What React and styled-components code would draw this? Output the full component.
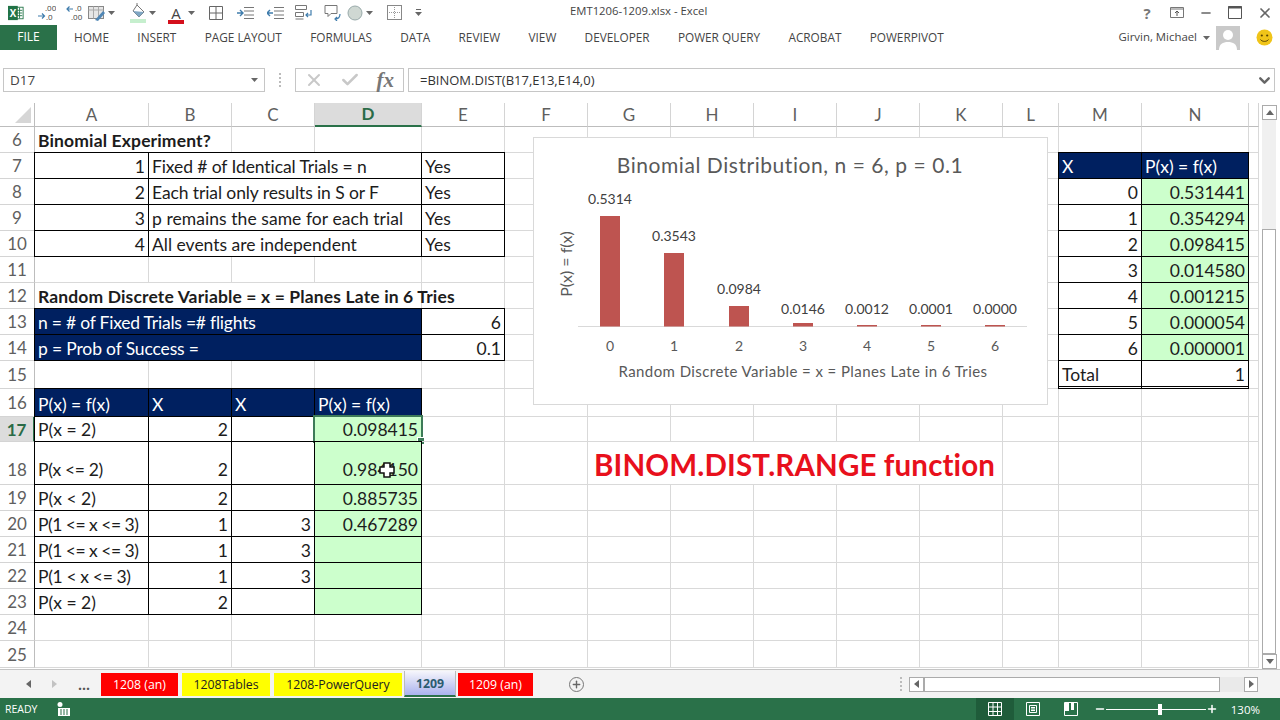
import styled, { createGlobalStyle } from 'styled-components';
import { X, Check, ChevronDown, Plus, Minus } from 'lucide-react';

const GlobalStyle = createGlobalStyle`
  html, body {
    margin: 0;
    padding: 0;
    background: #fff;
    overflow: hidden;
  }
  * {
    box-sizing: border-box;
  }
`;

const GREEN = '#2a7149';
const NAVY = '#002060';
const MINT = '#ccffcc';
const UI_FONT = '"Open Sans", "Liberation Sans", sans-serif';
const CELL_FONT = 'Lato, "Liberation Sans", sans-serif';

const Page = styled.div`
  width: 1280px;
  height: 720px;
  display: flex;
  flex-direction: column;
  font-family: ${UI_FONT};
  color: #444;
  overflow: hidden;
`;

const TitleBar = styled.div`
  height: 25px;
  display: flex;
  align-items: center;
  position: relative;
  padding-left: 8px;
`;

const TitleText = styled.div`
  position: absolute;
  left: 570px;
  top: 3px;
  font-size: 11.300px;
  color: #444;
`;

const QatSlot = styled.span`
  display: flex;
  align-items: center;
  margin-left: ${(p) => p.$gap || 0}px;
`;

const WindowButtons = styled.div`
  margin-left: auto;
  display: flex;
  align-items: center;
  gap: 15px;
  padding-right: 7px;
`;

const Help = styled.span`
  font-size: 15px;
  font-weight: 700;
  color: #777;
  width: 16px;
  text-align: center;
`;

const Ribbon = styled.div`
  height: 25px;
  display: flex;
  align-items: center;
`;

const FileTab = styled.div`
  width: 57px;
  height: 25px;
  padding-bottom: 2px;
  background: ${GREEN};
  color: #fff;
  font-size: 12px;
  display: flex;
  align-items: center;
  justify-content: center;
`;

const RibbonTabs = styled.div`
  display: flex;
  gap: 28.300px;
  margin-left: 17px;
  padding-bottom: 2px;
  font-size: 11.800px;
  color: #444;
`;

const UserArea = styled.div`
  margin-left: auto;
  display: flex;
  align-items: center;
  font-size: 11.400px;
  color: #444;
  padding-right: 7px;
`;

const UserName = styled.span`
  padding-bottom: 2px;
`;

const FormulaRow = styled.div`
  height: 24px;
  margin-top: 18px;
  padding-left: 3px;
  padding-right: 5px;
  display: flex;
  align-items: stretch;
`;

const NameBox = styled.div`
  width: 262px;
  border: 1px solid #c6c6c6;
  display: flex;
  align-items: center;
  justify-content: space-between;
  padding: 0 6px;
  font-size: 13.500px;
  color: #444;
`;

const GripDots = styled.div`
  width: 30px;
  display: flex;
  flex-direction: column;
  align-items: center;
  justify-content: center;
  gap: 2px;

  span {
    width: 2px;
    height: 2px;
    background: #bbb;
  }
`;

const FxButtons = styled.div`
  width: 109px;
  border: 1px solid #c6c6c6;
  display: flex;
  align-items: center;
  justify-content: space-between;
  padding: 0 9px 0 8px;
`;

const FxLabel = styled.span`
  font-family: "Liberation Serif", serif;
  font-style: italic;
  font-weight: 700;
  font-size: 21px;
  line-height: 20px;
  color: #777;
`;

const FormulaInput = styled.div`
  flex: 1;
  margin-left: 4px;
  border: 1px solid #c6c6c6;
  display: flex;
  align-items: center;
  justify-content: space-between;
  padding: 0 1px 0 11px;
  font-size: 13px;
  color: #333;
`;

const SheetArea = styled.div`
  margin-top: 11px;
  height: 566px;
  display: flex;
  position: relative;
`;

const Grid = styled.div`
  width: 1259px;
  height: 566px;
  display: grid;
  grid-template-columns: ${(p) => p.$columns};
  grid-template-rows: ${(p) => p.$rows};
  align-content: start;
  font-family: ${CELL_FONT};
  font-size: 17.500px;
  color: #1c1c1c;
`;

const ColHead = styled.div`
  display: flex;
  align-items: center;
  justify-content: center;
  font-size: 17px;
  line-height: 24px;
  color: ${(p) => (p.$active ? '#2a6b47' : '#5f5f5f')};
  font-weight: ${(p) => (p.$active ? 700 : 400)};
  background: ${(p) => (p.$active ? '#dcdcdc' : '#fff')};
  border-right: 1px solid #d4d4d4;
  border-bottom: ${(p) => (p.$active ? `2px solid ${GREEN}` : '1px solid #bdbdbd')};
`;

const RowHead = styled(ColHead)`
  align-items: ${(p) => (p.$bottom ? 'flex-end' : 'center')};
  padding: ${(p) => (p.$bottom ? '0 0 2px' : '1px 0 0')};
  border-right: ${(p) => (p.$active ? `2px solid ${GREEN}` : '1px solid #bdbdbd')};
  border-bottom: 1px solid #d4d4d4;
`;

const Corner = styled.div`
  border-right: 1px solid #bdbdbd;
  border-bottom: 1px solid #bdbdbd;
  display: flex;
  align-items: flex-end;
  justify-content: flex-end;
  padding: 0 3px 3px 0;
`;

const Cell = styled.div`
  grid-column: span ${(p) => p.$span || 1};
  display: flex;
  align-items: flex-end;
  justify-content: ${(p) => (p.$right ? 'flex-end' : 'flex-start')};
  padding: 0 3px ${(p) => p.$lift || 0}px ${(p) => (p.$red ? 6 : 3)}px;
  line-height: ${(p) => (p.$red ? '38px' : '22px')};
  white-space: nowrap;
  position: relative;
  min-width: 0;
  font-weight: ${(p) => (p.$bold ? 700 : 400)};
  letter-spacing: ${(p) => (p.$bold ? 0.14 : p.$ls || 0)}px;
  color: ${(p) => (p.$navy ? '#fff' : p.$red ? '#e8101c' : '#1c1c1c')};
  background: ${(p) => (p.$navy ? NAVY : p.$mint ? MINT : 'transparent')};
  font-size: ${(p) => (p.$red ? '29.500px' : 'inherit')};
  border-right: 1px solid ${(p) => (p.$box || p.$navy ? '#000' : '#d9d9d9')};
  border-bottom: ${(p) => (p.$double ? '3px double #000' : `1px solid ${p.$box || p.$navy ? '#000' : '#d9d9d9'}`)};
  box-shadow: ${(p) => (p.$box || p.$navy ? '-1px 0 0 #000, 0 -1px 0 #000, -1px -1px 0 #000' : 'none')};
`;

const Selection = styled.div`
  position: absolute;
  left: -2px;
  top: -2px;
  right: -2px;
  bottom: -2px;
  border: 2px solid #3d7a58;
  pointer-events: none;

  &::after {
    content: '';
    position: absolute;
    right: -4px;
    bottom: -4px;
    width: 6px;
    height: 6px;
    background: #3d7a58;
    border: 1px solid #fff;
  }
`;

const ChartBox = styled.div`
  position: absolute;
  left: 533px;
  top: 34px;
  width: 515px;
  height: 268px;
  background: #fff;
  border: 1px solid #d9d9d9;
`;

const CrossCursor = styled.svg`
  position: absolute;
  left: 379px;
  top: 359px;
`;

const VScroll = styled.div`
  width: 21px;
  padding: 2px 4px 0 3px;
  display: flex;
  flex-direction: column;
  background: #fff;
`;

const ScrollArrow = styled.div`
  width: ${(p) => p.$w || 15}px;
  height: 15px;
  flex: none;
  border: 1px solid #ababab;
  background: #fff;
  display: flex;
  align-items: center;
  justify-content: center;
`;

const Triangle = styled.span`
  width: 0;
  height: 0;
  ${(p) => (p.$dir === 'up' ? 'border: 4px solid transparent; border-top: 0; border-bottom: 5px solid #666;' : '')}
  ${(p) => (p.$dir === 'down' ? 'border: 4px solid transparent; border-bottom: 0; border-top: 5px solid #666;' : '')}
  ${(p) => (p.$dir === 'left' ? 'border: 4px solid transparent; border-left: 0; border-right: 5px solid #666;' : '')}
  ${(p) => (p.$dir === 'right' ? 'border: 4px solid transparent; border-right: 0; border-left: 5px solid #666;' : '')}
  ${(p) => (p.$pale ? 'opacity: .35;' : '')}
`;

const VTrack = styled.div`
  flex: 1;
  background: #f0f0f0;
  padding-top: 109px;
  display: flex;
`;

const VThumb = styled.div`
  flex: 1;
  background: #fff;
  border: 1px solid #ababab;
`;

const TabBar = styled.div`
  height: 29px;
  background: #f3f3f3;
  border-top: 1px solid #c4c4c4;
  display: flex;
  align-items: center;
`;

const TabNav = styled.div`
  width: 101px;
  display: flex;
  align-items: center;
  padding-left: 26px;
  gap: 21px;
  font-size: 14px;
  font-weight: 700;
  color: #555;
`;

const SheetTabs = styled.div`
  display: flex;
  align-items: center;
  gap: 4px;
  height: 26px;
`;

const SheetTab = styled.div`
  height: 23px;
  width: ${(p) => p.$w}px;
  margin-left: ${(p) => p.$pull || 0}px;
  display: flex;
  align-items: center;
  justify-content: center;
  font-size: 12.300px;
  background: ${(p) => p.$bg};
  color: ${(p) => p.$fg};
  ${(p) => (p.$active ? `
    height: 26px;
    font-weight: 700;
    background: linear-gradient(#f6f6fb, #aab2ee);
    border-bottom: 2px solid ${GREEN};
    border-left: 1px solid #bbb;
    border-right: 1px solid #bbb;
  ` : '')}
`;

const AddSheet = styled.div`
  width: 15px;
  height: 15px;
  margin-left: 36px;
  border: 1.500px solid #777;
  border-radius: 50%;
  display: flex;
  align-items: center;
  justify-content: center;
  color: #666;
`;

const HScrollWrap = styled.div`
  margin-left: auto;
  margin-right: 22px;
  display: flex;
  align-items: center;
`;

const HGrip = styled(GripDots)`
  width: 16px;
`;

const HThumb = styled.div`
  width: 296px;
  height: 15px;
  background: #fff;
  border: 1px solid #ababab;
`;

const HTrack = styled.div`
  width: 24px;
  height: 15px;
  background: #eaeaea;
`;

const StatusBar = styled.div`
  height: 22px;
  background: ${GREEN};
  color: #fff;
  display: flex;
  align-items: center;
  font-size: 10.500px;
  padding-left: 5px;
  padding-right: 20px;
`;

const StatusRight = styled.div`
  margin-left: auto;
  display: flex;
  align-items: center;
  height: 22px;
  font-size: 11.500px;
`;

const ViewButton = styled.div`
  width: 38px;
  height: 22px;
  display: flex;
  align-items: center;
  justify-content: center;
  background: ${(p) => (p.$active ? '#1f5c3a' : 'transparent')};
`;

const ZoomSlider = styled.div`
  width: 100px;
  height: 1px;
  background: #fff;
  position: relative;
`;

const ZoomThumb = styled.span`
  position: absolute;
  left: 52px;
  top: -5px;
  width: 4px;
  height: 11px;
  background: #fff;
`;

const ZoomValue = styled.span`
  margin-left: 13px;
`;

const columns = ['A', 'B', 'C', 'D', 'E', 'F', 'G', 'H', 'I', 'J', 'K', 'L', 'M', 'N', ''];
const colWidths = [35, 114, 83, 83, 107, 83, 83, 83, 83, 83, 83, 83, 56, 83, 107, 10];
const rowHeights = {
  6: 26, 7: 26, 8: 26, 9: 26, 10: 26, 11: 26, 12: 26, 13: 26, 14: 26, 15: 28, 16: 28, 17: 25, 18: 43,
  19: 26, 20: 26, 21: 26, 22: 26, 23: 26, 24: 26, 25: 27,
};

const yes = { t: 'Yes', box: true };
const right = (t, extra) => ({ t, right: true, box: true, ...extra });
const left = (t, extra) => ({ t, box: true, ...extra });
const mint = (t, extra) => ({ t, right: true, box: true, mint: true, ...extra });

// row -> column -> cell; anything not listed is an empty cell
const sheet = {
  6: { A: { t: 'Binomial Experiment?', bold: true, span: 2 } },
  7: { A: right('1'), B: left('Fixed # of Identical Trials = n', { span: 3, ls: -0.1 }), E: yes, M: { t: 'X', navy: true }, N: { t: 'P(x) = f(x)', navy: true } },
  8: { A: right('2'), B: left('Each trial only results in S or F', { span: 3, ls: -0.1 }), E: yes, M: right('0'), N: mint('0.531441') },
  9: { A: right('3'), B: left('p remains the same for each trial', { span: 3, ls: 0.06 }), E: yes, M: right('1'), N: mint('0.354294') },
  10: { A: right('4'), B: left('All events are independent', { span: 3 }), E: yes, M: right('2'), N: mint('0.098415') },
  11: { M: right('3'), N: mint('0.014580') },
  12: { A: { t: 'Random Discrete Variable = x = Planes Late in 6 Tries', bold: true, span: 4 }, M: right('4'), N: mint('0.001215') },
  13: { A: { t: 'n = # of Fixed Trials =# flights', navy: true, span: 4, ls: -0.22 }, E: right('6'), M: right('5'), N: mint('0.000054') },
  14: { A: { t: 'p = Prob of Success =', navy: true, span: 4, ls: -0.15 }, E: right('0.1'), M: right('6'), N: mint('0.000001') },
  15: { M: left('Total', { double: true }), N: right('1', { double: true }) },
  16: { A: { t: 'P(x) = f(x)', navy: true }, B: { t: 'X', navy: true }, C: { t: 'X', navy: true }, D: { t: 'P(x) = f(x)', navy: true } },
  17: { A: left('P(x = 2)'), B: right('2'), C: left(''), D: mint('0.098415', { selected: true }) },
  18: {
    A: left('P(x <= 2)', { lift: 3, ls: -0.35 }),
    B: right('2', { lift: 3 }),
    C: left(''),
    D: mint('0.984150', { lift: 3 }),
    G: { t: 'BINOM.DIST.RANGE function', bold: true, red: true, span: 5 },
  },
  19: { A: left('P(x < 2)'), B: right('2'), C: left(''), D: mint('0.885735') },
  20: { A: left('P(1 <= x <= 3)', { ls: -0.5 }), B: right('1'), C: right('3'), D: mint('0.467289') },
  21: { A: left('P(1 <= x <= 3)', { ls: -0.5 }), B: right('1'), C: right('3'), D: mint('') },
  22: { A: left('P(1 < x <= 3)', { ls: -0.35 }), B: right('1'), C: right('3'), D: mint('') },
  23: { A: left('P(x = 2)'), B: right('2'), C: left(''), D: mint('') },
};

function renderRow(row) {
  const defs = sheet[row] || {};
  const out = [];
  let skip = 0;
  columns.forEach((col) => {
    if (skip > 0) {
      skip -= 1;
      return;
    }
    const c = defs[col] || {};
    if (c.span) skip = c.span - 1;
    out.push(
      <Cell
        key={`${col}${row}`}
        $span={c.span}
        $right={c.right}
        $bold={c.bold}
        $navy={c.navy}
        $mint={c.mint}
        $red={c.red}
        $box={c.box}
        $double={c.double}
        $lift={c.lift}
        $ls={c.ls}
      >
        {c.t}
        {c.selected ? <Selection /> : null}
      </Cell>,
    );
  });
  return out;
}

const bars = [
  { x: 600, top: 216, label: '0.5314', labelY: 199 },
  { x: 664, top: 253, label: '0.3543', labelY: 236 },
  { x: 729, top: 306, label: '0.0984', labelY: 289 },
  { x: 793, top: 323, label: '0.0146', labelY: 309 },
  { x: 857, top: 325, label: '0.0012', labelY: 309 },
  { x: 921, top: 325, label: '0.0001', labelY: 309 },
  { x: 985, top: 325, label: '0.0000', labelY: 309 },
];

function Chart() {
  return (
    <ChartBox>
      <svg width="513" height="266" viewBox="534 138 513 266" fontFamily={CELL_FONT}>
        <text x="790" y="173" textAnchor="middle" fontSize="21" letterSpacing="0.55" fill="#595959">
          Binomial Distribution, n = 6, p = 0.1
        </text>
        <text x="572" y="264" textAnchor="middle" fontSize="16" fill="#595959" transform="rotate(-90 572 264)">
          P(x) = f(x)
        </text>
        <line x1="578" y1="326.500" x2="1027" y2="326.500" stroke="#d9d9d9" />
        {bars.map((b, i) => (
          <g key={b.label + i}>
            <rect x={b.x} y={b.top} width="20" height={326.500 - b.top} fill="#be5450" />
            <text x={b.x + 10} y={b.labelY + 5} textAnchor="middle" fontSize="14" fill="#404040">{b.label}</text>
            <text x={b.x + 10} y="351" textAnchor="middle" fontSize="14" fill="#595959">{i}</text>
          </g>
        ))}
        <text x="803" y="377" textAnchor="middle" fontSize="15" letterSpacing="0.42" fill="#595959">
          Random Discrete Variable = x = Planes Late in 6 Tries
        </text>
      </svg>
    </ChartBox>
  );
}

function ExcelLogo() {
  return (
    <svg width="16" height="16" viewBox="0 0 18 18">
      <rect x="7" y="2.500" width="10" height="13" fill="#fff" stroke="#217346" />
      <path d="M10 6h6M10 9h6M10 12h6M13 3v12" stroke="#217346" />
      <rect x="0" y="1" width="11" height="16" fill="#217346" />
      <text x="5.500" y="13" textAnchor="middle" fontSize="11" fontWeight="700" fill="#fff" fontFamily={UI_FONT}>X</text>
    </svg>
  );
}

function Caret() {
  return <svg width="7" height="4" viewBox="0 0 7 4"><path d="M0 0h7L3.500 4z" fill="#666" /></svg>;
}

function DecimalUp() {
  return (
    <svg width="18" height="24" viewBox="0 -3 18 24" fontFamily={UI_FONT}>
      <text x="7" y="7" fontSize="8" fill="#444">.00</text>
      <text x="8" y="16" fontSize="8" fill="#444">.0</text>
      <path d="M0 12h6M4 9.500l2.500 2.500L4 14.500" fill="none" stroke="#3f7cac" strokeWidth="1.200" />
    </svg>
  );
}

function DecimalDown() {
  return (
    <svg width="18" height="24" viewBox="0 -3 18 24" fontFamily={UI_FONT}>
      <text x="9" y="7" fontSize="8" fill="#444">.0</text>
      <text x="5" y="16" fontSize="8" fill="#444">.00</text>
      <path d="M1 5h6M3.500 2.500L1 5l2.500 2.500" fill="none" stroke="#3f7cac" strokeWidth="1.200" />
    </svg>
  );
}

function FormatTable() {
  return (
    <svg width="18" height="18" viewBox="0 0 18 18">
      <rect x="0.500" y="2.500" width="15" height="12" fill="#e6e6e6" stroke="#888" />
      <path d="M0.500 6h15M5.500 2.500v12M10.500 2.500v12" stroke="#aaa" />
      <path d="M7 16l8-9 2 2-7 8z" fill="#4f86b5" />
    </svg>
  );
}

function Bucket() {
  return (
    <svg width="17" height="20" viewBox="0 0 17 20">
      <path d="M7 2l7 7-5 5-6-6z" fill="#fff" stroke="#777" />
      <path d="M3 8l6 6 5-5z" fill="#7fa6c4" />
      <path d="M7 2V0" stroke="#777" />
      <rect x="0" y="16" width="16" height="4" fill="#c6efce" />
    </svg>
  );
}

function FontColor() {
  return (
    <svg width="16" height="24" viewBox="0 -5 16 24">
      <text x="8" y="13" textAnchor="middle" fontSize="15" fill="#444" fontFamily={UI_FONT}>A</text>
      <rect x="0" y="14" width="16" height="4" fill="#d40f1c" />
    </svg>
  );
}

function Borders() {
  return (
    <svg width="14" height="14" viewBox="0 0 14 14">
      <path d="M.5.500h13v13H.5zM7 .5v13M.5 7h13" fill="none" stroke="#666" />
    </svg>
  );
}

function Indent({ flip }) {
  return (
    <svg width="17" height="14" viewBox="0 0 17 14">
      <path d="M7 1.500h10M7 5h10M7 9h10M7 12.500h10" stroke="#777" />
      <path d={flip ? 'M6 7H0M3 4L0 7l3 3' : 'M0 7h6M3 4l3 3-3 3'} fill="none" stroke="#3f7cac" strokeWidth="1.400" />
    </svg>
  );
}

function WrapLines() {
  return (
    <svg width="17" height="17" viewBox="0 0 17 17">
      <path d="M.5 1.500h11v4H.5zM.5 8.500h8v4H.5zM.5 15h8" fill="none" stroke="#777" />
      <path d="M16 6v5h-5M13 9l-2 2 2 2" fill="none" stroke="#3f7cac" strokeWidth="1.200" />
    </svg>
  );
}

function CommentIcon() {
  return (
    <svg width="17" height="17" viewBox="0 0 17 17">
      <path d="M1 1.500h12v8H7l-3 3v-3H1z" fill="#fff" stroke="#777" />
      <path d="M16 10c0 3-2 5-5 5M13 13l-2 2 2 2" fill="none" stroke="#3f7cac" strokeWidth="1.200" />
    </svg>
  );
}

function CircleShape() {
  return (
    <svg width="16" height="16" viewBox="0 0 16 16">
      <circle cx="8" cy="8" r="7" fill="#cfd8d3" stroke="#9aa" />
    </svg>
  );
}

function DottedBox() {
  return (
    <svg width="15" height="15" viewBox="0 0 15 15">
      <rect x=".5" y=".5" width="14" height="14" fill="#fff" stroke="#888" />
      <path d="M7.500 2v11M2 7.500h11" stroke="#999" strokeDasharray="1 1" />
    </svg>
  );
}

function QatMore() {
  return (
    <svg width="7" height="7" viewBox="0 0 7 7">
      <path d="M1 .5h5" stroke="#666" />
      <path d="M0 3h7L3.500 7z" fill="#666" />
    </svg>
  );
}

function RibbonDisplay() {
  return (
    <svg width="14" height="11" viewBox="0 0 14 11">
      <path d="M.5 .5h13v10H.5z" fill="none" stroke="#777" />
      <path d="M.5 2h13" stroke="#777" />
      <path d="M7 9V4M5 6l2-2 2 2" fill="none" stroke="#555" />
    </svg>
  );
}

function Avatar() {
  return (
    <svg width="24" height="24" viewBox="0 0 24 24">
      <rect width="24" height="24" fill="#c9c9c9" />
      <circle cx="12" cy="9" r="5" fill="#fff" />
      <path d="M3 24c0-6 4-8 9-8s9 2 9 8z" fill="#fff" />
    </svg>
  );
}

function Smiley() {
  return (
    <svg width="17" height="17" viewBox="0 0 17 17">
      <circle cx="8.500" cy="8.500" r="8" fill="#f0c419" />
      <circle cx="5.800" cy="6.500" r="1.100" fill="#5a4300" />
      <circle cx="11.200" cy="6.500" r="1.100" fill="#5a4300" />
      <path d="M4.500 10.500c1.500 2.500 6.500 2.500 8 0" fill="none" stroke="#5a4300" />
    </svg>
  );
}

function Corner3D() {
  return <svg width="16" height="16" viewBox="0 0 16 16"><path d="M16 0v16H0z" fill="#d6d6d6" /></svg>;
}

function MacroIcon() {
  return (
    <svg width="14" height="14" viewBox="0 0 14 14">
      <circle cx="3" cy="2.500" r="2.500" fill="#fff" />
      <path d="M1 6h12v8H1z" fill="#fff" />
      <path d="M3 8h2M6 8h2M9 8h2M3 10h2M6 10h2M9 10h2M3 12h2M6 12h2M9 12h2" stroke={GREEN} />
    </svg>
  );
}

function NormalView() {
  return (
    <svg width="14" height="14" viewBox="0 0 14 14">
      <path d="M.5 .5h13v13H.5zM5 .5v13M9.500 .5v13M.5 5h13M.5 9.500h13" fill="none" stroke="#fff" />
    </svg>
  );
}

function LayoutView() {
  return (
    <svg width="14" height="14" viewBox="0 0 14 14">
      <path d="M.5 .5h13v13H.5z" fill="none" stroke="#fff" />
      <path d="M3.500 3.500h7v7h-7zM5 5.500h4M5 7h4M5 8.500h4" fill="none" stroke="#fff" />
    </svg>
  );
}

function BreakView() {
  return (
    <svg width="14" height="14" viewBox="0 0 14 14">
      <path d="M.5 .5h13v13H.5z" fill="none" stroke="#fff" />
      <path d="M1 1h4v8H1zM7 1h3v7H7z" fill="#fff" />
    </svg>
  );
}

export default function App() {
  const rows = Object.keys(rowHeights).map(Number);
  const gridRows = `24px ${rows.map((r) => `${rowHeights[r]}px`).join(' ')}`;

  return (
    <Page>
      <GlobalStyle />
      <TitleBar>
        <QatSlot><ExcelLogo /></QatSlot>
        <QatSlot $gap={14}><DecimalUp /></QatSlot>
        <QatSlot $gap={10}><DecimalDown /></QatSlot>
        <QatSlot $gap={4}><FormatTable /></QatSlot>
        <QatSlot $gap={2}><Caret /></QatSlot>
        <QatSlot $gap={15}><Bucket /></QatSlot>
        <QatSlot $gap={2}><Caret /></QatSlot>
        <QatSlot $gap={12}><FontColor /></QatSlot>
        <QatSlot $gap={4}><Caret /></QatSlot>
        <QatSlot $gap={14}><Borders /></QatSlot>
        <QatSlot $gap={14}><Indent /></QatSlot>
        <QatSlot $gap={13}><Indent flip /></QatSlot>
        <QatSlot $gap={11}><WrapLines /></QatSlot>
        <QatSlot $gap={12}><CommentIcon /></QatSlot>
        <QatSlot $gap={6}><CircleShape /></QatSlot>
        <QatSlot $gap={3}><Caret /></QatSlot>
        <QatSlot $gap={14}><DottedBox /></QatSlot>
        <QatSlot $gap={13}><QatMore /></QatSlot>
        <TitleText>EMT1206-1209.xlsx - Excel</TitleText>
        <WindowButtons>
          <Help>?</Help>
          <RibbonDisplay />
          <Minus size={14} strokeWidth={2.500} color="#666" />
          <svg width="14" height="13" viewBox="0 0 14 13"><path d="M.5 .5h13v12H.5z" fill="none" stroke="#555" /><path d="M0 1.500h14" stroke="#555" strokeWidth="2" /></svg>
          <X size={16} strokeWidth={2.600} color="#666" />
        </WindowButtons>
      </TitleBar>

      <Ribbon>
        <FileTab>FILE</FileTab>
        <RibbonTabs>
          <span>HOME</span>
          <span>INSERT</span>
          <span>PAGE LAYOUT</span>
          <span>FORMULAS</span>
          <span>DATA</span>
          <span>REVIEW</span>
          <span>VIEW</span>
          <span>DEVELOPER</span>
          <span>POWER QUERY</span>
          <span>ACROBAT</span>
          <span>POWERPIVOT</span>
        </RibbonTabs>
        <UserArea>
          <UserName>Girvin, Michael</UserName>
          <QatSlot $gap={6}><Caret /></QatSlot>
          <QatSlot $gap={6}><Avatar /></QatSlot>
          <QatSlot $gap={16}><Smiley /></QatSlot>
        </UserArea>
      </Ribbon>

      <FormulaRow>
        <NameBox>
          D17
          <Caret />
        </NameBox>
        <GripDots><span /><span /><span /><span /></GripDots>
        <FxButtons>
          <X size={20} strokeWidth={2.400} color="#c8c8c8" />
          <Check size={20} strokeWidth={3} color="#c8c8c8" />
          <FxLabel>fx</FxLabel>
        </FxButtons>
        <FormulaInput>
          =BINOM.DIST(B17,E13,E14,0)
          <ChevronDown size={17} strokeWidth={3.400} color="#666" />
        </FormulaInput>
      </FormulaRow>

      <SheetArea>
        <Grid $columns={colWidths.map((w) => `${w}px`).join(' ')} $rows={gridRows}>
          <Corner><Corner3D /></Corner>
          {columns.map((col) => (
            <ColHead key={col || 'edge'} $active={col === 'D'}>{col}</ColHead>
          ))}
          {rows.map((row) => [
            <RowHead key={`h${row}`} $active={row === 17} $bottom={row === 18}>{row}</RowHead>,
            ...renderRow(row),
          ])}
        </Grid>
        <Chart />
        <CrossCursor width="16" height="16" viewBox="0 0 16 16">
          <path d="M5 1h6v4h4v6h-4v4H5v-4H1V5h4z" fill="#fff" stroke="#111" strokeWidth="1.500" />
        </CrossCursor>
        <VScroll>
          <ScrollArrow><Triangle $dir="up" /></ScrollArrow>
          <VTrack><VThumb /></VTrack>
          <ScrollArrow><Triangle $dir="down" /></ScrollArrow>
        </VScroll>
      </SheetArea>

      <TabBar>
        <TabNav>
          <Triangle $dir="left" />
          <Triangle $dir="right" $pale />
          <span>...</span>
        </TabNav>
        <SheetTabs>
          <SheetTab $w={77} $bg="#ff0000" $fg="#fff">1208 (an)</SheetTab>
          <SheetTab $w={88} $bg="#ffff00" $fg="#222">1208Tables</SheetTab>
          <SheetTab $w={128} $bg="#ffff00" $fg="#222">1208-PowerQuery</SheetTab>
          <SheetTab $w={52} $pull={-2} $active $fg="#2b5b70">1209</SheetTab>
          <SheetTab $w={75} $pull={-2} $bg="#ff0000" $fg="#fff">1209 (an)</SheetTab>
        </SheetTabs>
        <AddSheet><Plus size={11} strokeWidth={3} /></AddSheet>
        <HScrollWrap>
          <HGrip><span /><span /><span /><span /></HGrip>
          <ScrollArrow><Triangle $dir="left" /></ScrollArrow>
          <HThumb />
          <HTrack />
          <ScrollArrow $w={14}><Triangle $dir="right" /></ScrollArrow>
        </HScrollWrap>
      </TabBar>

      <StatusBar>
        READY
        <QatSlot $gap={20}><MacroIcon /></QatSlot>
        <StatusRight>
          <ViewButton $active><NormalView /></ViewButton>
          <ViewButton><LayoutView /></ViewButton>
          <ViewButton><BreakView /></ViewButton>
          <QatSlot $gap={4}><Minus size={12} strokeWidth={3} color="#fff" /></QatSlot>
          <ZoomSlider><ZoomThumb /></ZoomSlider>
          <Plus size={12} strokeWidth={3} color="#fff" />
          <ZoomValue>130%</ZoomValue>
        </StatusRight>
      </StatusBar>
    </Page>
  );
}
